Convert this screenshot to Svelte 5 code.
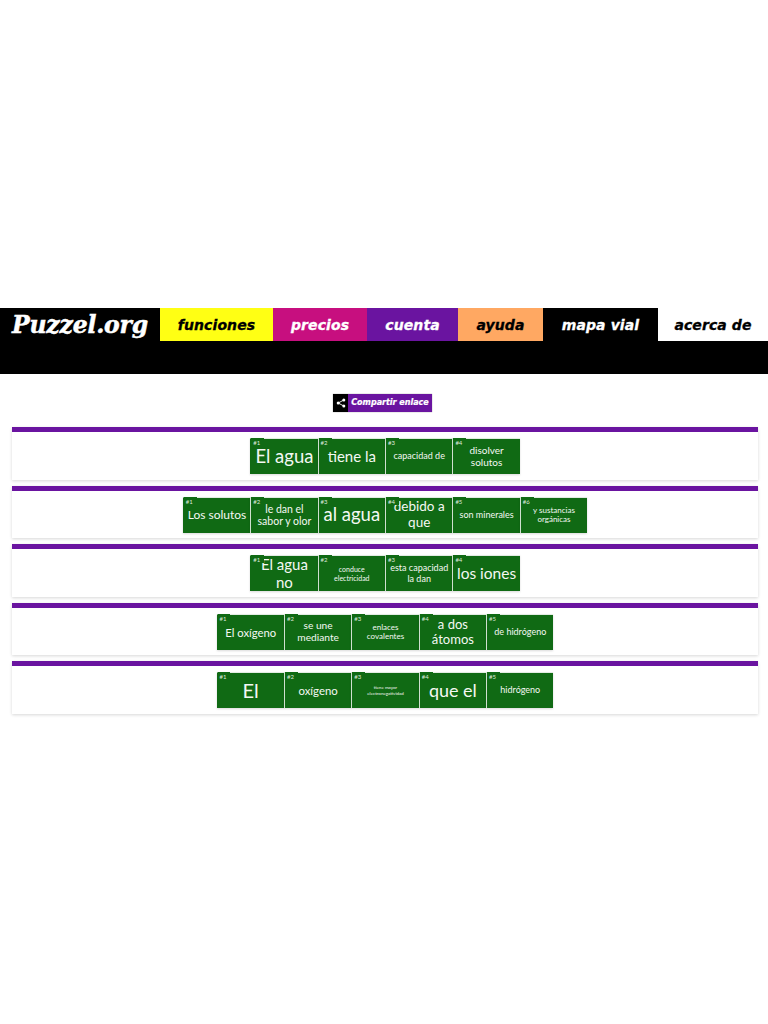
<script>
	const nav = [
		{ label: 'funciones', width: 113, bg: '#ffff14', fg: '#000' },
		{ label: 'precios', width: 94, bg: '#c70f7f', fg: '#fff' },
		{ label: 'cuenta', width: 91, bg: '#6a14a0', fg: '#fff' },
		{ label: 'ayuda', width: 85, bg: '#ffa862', fg: '#000' },
		{ label: 'mapa vial', width: 115, bg: '#000', fg: '#fff' },
		{ label: 'acerca de', width: 110, bg: '#fff', fg: '#000' }
	];

	const rows = [
		[['El agua', 18.5], ['tiene la', 15], ['capacidad de', 9], ['disolver solutos', 10]],
		[['Los solutos', 12], ['le dan el sabor y olor', 10.5], ['al agua', 18.5], ['debido a que', 13.5], ['son minerales', 9], ['y sustancias orgánicas', 8]],
		[['El agua no', 15], ['conduce electricidad', 7], ['esta capacidad la dan', 9], ['los iones', 15.5]],
		[['El oxígeno', 11.3], ['se une mediante', 10.2], ['enlaces covalentes', 8], ['a dos átomos', 13], ['de hidrógeno', 9]],
		[['El', 20], ['oxígeno', 11.4], ['tiene mayor electronegatividad', 4.5], ['que el', 18], ['hidrógeno', 9]]
	];
</script>

<div class="page">
	<header>
		<div class="nav-top">
			<div class="logo">Puzzel.org</div>
			{#each nav as item}
				<div class="nav-item" style="width: {item.width}px; background: {item.bg}; color: {item.fg}">{item.label}</div>
			{/each}
		</div>
		<div class="nav-bottom"></div>
	</header>

	<div class="share-row">
		<div class="share">
			<span class="share-icon">
				<svg width="10" height="10" viewBox="0 0 10 10">
					<path d="M7.8 2 2.2 5l5.6 3" fill="none" stroke="#fff" stroke-width="0.9" />
					<circle cx="7.8" cy="2" r="1.5" fill="#fff" />
					<circle cx="2.2" cy="5" r="1.5" fill="#fff" />
					<circle cx="7.8" cy="8" r="1.5" fill="#fff" />
				</svg>
			</span>
			<span class="share-text">Compartir enlace</span>
		</div>
	</div>

	<main>
		{#each rows as row}
			<section class="card">
				<div class="tiles">
					{#each row as [text, size], i}
						<div class="tile">
							<span class="num">#{i + 1}</span>
							<span class="text" style="font-size: {size}px">{text}</span>
						</div>
					{/each}
				</div>
			</section>
		{/each}
	</main>
</div>

<style>
	:global(body) {
		background: #fff;
	}
	.page {
		padding-top: 308px;
		height: 716px;
		overflow: hidden;
	}
	header {
		background: #000;
	}
	.nav-top {
		display: flex;
		height: 33px;
	}
	.nav-bottom {
		height: 33px;
	}
	.logo {
		width: 160px;
		color: #fff;
		font: italic bold 23.5px/34px 'DejaVu Serif', serif;
		-webkit-text-stroke: 0.5px #fff;
		letter-spacing: -0.2px;
		padding-left: 12px;
		box-sizing: border-box;
		white-space: nowrap;
		overflow: hidden;
	}
	.nav-item {
		display: flex;
		align-items: center;
		justify-content: center;
		font: italic bold 14px 'DejaVu Sans', sans-serif;
		-webkit-text-stroke: 0.3px currentColor;
		letter-spacing: 0.1px;
	}
	.share-row {
		display: flex;
		justify-content: center;
		padding: 20px 3px 15px 0;
	}
	.share {
		display: flex;
		height: 18px;
		box-shadow: 0 0 1px #888;
	}
	.share-icon {
		width: 15px;
		background: #000;
		display: flex;
		align-items: center;
		justify-content: center;
	}
	.share-text {
		width: 84px;
		background: #6a14a0;
		color: #fff;
		font: italic bold 8px/17px 'DejaVu Sans', sans-serif;
		-webkit-text-stroke: 0.2px #fff;
		text-align: center;
		white-space: nowrap;
	}
	main {
		display: flex;
		flex-direction: column;
		gap: 6px;
		margin: 0 10px 0 12px;
	}
	.card {
		height: 52.5px;
		box-sizing: border-box;
		border-top: 5px solid #6a14a0;
		box-shadow: 0 1px 3px rgba(0, 0, 0, 0.16);
		padding-top: 6px;
	}
	.tiles {
		display: flex;
		justify-content: center;
	}
	.tile {
		position: relative;
		width: 67.4px;
		height: 36px;
		box-sizing: border-box;
		background: #106a14;
		border-left: 1px solid #cfe0cf;
		border-top: 1px solid #e3ece3;
		box-shadow: 0 1px 2px rgba(0, 0, 0, 0.15);
		color: #f4f8f3;
		display: flex;
		align-items: center;
		justify-content: center;
		text-align: center;
		padding: 0 3px;
	}
	.tile:first-child {
		border-left-color: #106a14;
	}
	.num {
		position: absolute;
		left: 0;
		top: -1px;
		padding: 1px 4px 0 2px;
		background: #106a14;
		font: 6px/7px 'Lato', sans-serif;
		color: #dfe9de;
	}
	.text {
		font-family: 'Lato', sans-serif;
		line-height: 1.15;
	}
</style>
